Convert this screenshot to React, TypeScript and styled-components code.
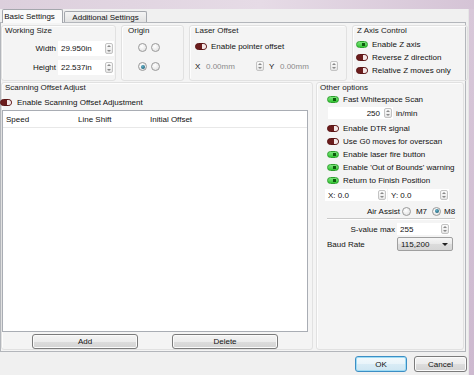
import React from 'react';
import styled, { createGlobalStyle, css } from 'styled-components';

const GlobalStyle = createGlobalStyle`
  html, body { margin: 0; padding: 0; background: #f0f0f0; }
  body {
    font-family: 'Liberation Sans', Arial, sans-serif;
    font-size: 8px;
    color: #111;
  }
  * { box-sizing: border-box; }
`;

const Window = styled.div`
  width: 474px;
  height: 375px;
  overflow: hidden;
  display: flex;
  flex-direction: column;
  background: #f0f0f0;
`;

const TitleStrip = styled.div`
  height: 9px;
  flex: none;
  background: linear-gradient(to right, #dccfdc, #e6dbe6 55%, #d5c4d6);
`;

const Body = styled.div`
  flex: 1;
  display: flex;
`;

const Main = styled.div`
  width: 468px;
  display: flex;
  flex-direction: column;
`;

const Frame = styled.div`
  flex: 1;
  border-left: 1px solid #e6e6e6;
  background: linear-gradient(to bottom, #d8c8d9, #cdb9cf);
`;

const TabBar = styled.div`
  height: 13px;
  display: flex;
  align-items: flex-end;
  gap: 1px;
  padding-left: 2px;
  position: relative;
  z-index: 1;
`;

const Tab = styled.div<{ $active?: boolean; $w: number }>`
  width: ${(p) => p.$w}px;
  display: flex;
  align-items: center;
  justify-content: center;
  border: 1px solid #a4a7ad;
  border-bottom: none;
  border-radius: 2px 2px 0 0;
  ${(p) =>
    p.$active
      ? css`
          height: 14px;
          margin-bottom: -1px;
          background: #fafafa;
          padding-right: 6px;
        `
      : css`
          height: 11px;
          background: linear-gradient(#f4f4f4, #e2e2e2);
        `}
`;

const Pane = styled.div`
  width: 466px;
  height: 330px;
  border: 1px solid #b3b6bb;
  background: #f4f4f4;
  padding: 1px 0 1px 0;
  display: flex;
  flex-direction: column;
  gap: 1px;
`;

const TopRow = styled.div`
  height: 58px;
  display: grid;
  grid-template-columns: 115px 63px 158px 116px;
  column-gap: 5px;
  padding-top: 1px;
`;

const BottomRow = styled.div`
  flex: 1;
  display: grid;
  grid-template-columns: 312px 148px;
  column-gap: 3px;
`;

const Group = styled.div<{ $pad?: number }>`
  border: 1px solid #e1e1e1;
  border-radius: 3px;
  box-shadow: inset 1px 1px 0 #fdfdfd;
  display: flex;
  flex-direction: column;
  padding-left: ${(p) => p.$pad ?? 0}px;
  min-width: 0;
`;

const GroupTitle = styled.div<{ $indent?: number }>`
  height: 10px;
  line-height: 9px;
  padding-left: ${(p) => p.$indent ?? 3}px;
  color: #222;
  white-space: nowrap;
`;

const Row = styled.div<{ $h?: number; $mt?: number; $pl?: number; $gap?: number }>`
  display: flex;
  align-items: center;
  height: ${(p) => p.$h ?? 13}px;
  margin-top: ${(p) => p.$mt ?? 0}px;
  padding-left: ${(p) => p.$pl ?? 0}px;
  gap: ${(p) => p.$gap ?? 0}px;
  white-space: nowrap;
`;

const Label = styled.span<{ $w?: number; $right?: boolean; $muted?: boolean }>`
  ${(p) => p.$w && `width: ${p.$w}px; flex: none;`}
  text-align: ${(p) => (p.$right ? 'right' : 'left')};
  color: ${(p) => (p.$muted ? '#7d7d7d' : '#111')};
`;

/* toggle switch that stands in for a check box */
const Toggle = styled.span<{ $on?: boolean }>`
  width: 12px;
  height: 7px;
  flex: none;
  border-radius: 4px;
  position: relative;
  ${(p) =>
    p.$on
      ? css`
          background: linear-gradient(#7ce57c, #34c634);
          border: 1px solid #2ea02e;
          &::after {
            content: '';
            position: absolute;
            right: 2px;
            top: 1px;
            width: 3px;
            height: 3px;
            background: #0d5a0d;
          }
        `
      : css`
          background: #6c1d1d;
          border: 1px solid #5a1515;
          &::after {
            content: '';
            position: absolute;
            right: 0;
            top: 0;
            width: 4px;
            height: 5px;
            border-radius: 0 3px 3px 0;
            background: #f4e8e8;
          }
        `}
`;

const Check = ({ on, label, gap = 4 }: { on?: boolean; label: string; gap?: number }) => (
  <>
    <Toggle $on={on} />
    <span style={{ marginLeft: gap }}>{label}</span>
  </>
);

const Field = styled.div<{ $w: number; $h?: number; $white?: boolean; $end?: boolean }>`
  width: ${(p) => p.$w}px;
  height: ${(p) => p.$h ?? 12}px;
  flex: none;
  display: flex;
  align-items: center;
  justify-content: ${(p) => (p.$end ? 'flex-end' : 'space-between')};
  gap: 4px;
  padding: 0 1px 0 3px;
  background: ${(p) => (p.$white ? '#ffffff' : 'transparent')};
  color: ${(p) => (p.$white ? '#111' : '#8a8a8a')};
`;

const SpinButton = styled.span<{ $h?: number }>`
  width: 8px;
  height: ${(p) => p.$h ?? 11}px;
  flex: none;
  border: 1px solid #c3c3c3;
  border-radius: 2px;
  background: linear-gradient(#fbfbfb, #e6e6e6);
  display: flex;
  flex-direction: column;
  align-items: center;
  justify-content: space-around;
`;

const Arrow = styled.span<{ $down?: boolean }>`
  width: 0;
  height: 0;
  border-left: 2px solid transparent;
  border-right: 2px solid transparent;
  ${(p) => (p.$down ? 'border-top: 2px solid #8a8a8a;' : 'border-bottom: 2px solid #8a8a8a;')}
`;

const Spin = ({ h }: { h?: number }) => (
  <SpinButton $h={h}>
    <Arrow />
    <Arrow $down />
  </SpinButton>
);

const Radio = styled.span<{ $checked?: boolean }>`
  width: 9px;
  height: 9px;
  flex: none;
  border-radius: 50%;
  border: 1px solid #9a9a9a;
  background: radial-gradient(circle at 40% 35%, #ffffff, #dcdcdc);
  position: relative;
  ${(p) =>
    p.$checked &&
    css`
      &::after {
        content: '';
        position: absolute;
        left: 1.5px;
        top: 1.5px;
        width: 4px;
        height: 4px;
        border-radius: 50%;
        background: radial-gradient(circle at 40% 35%, #5fb0c8, #124d63);
      }
    `}
`;

const RadioGrid = styled.div`
  display: grid;
  grid-template-columns: 9px 9px;
  column-gap: 4px;
  row-gap: 10px;
  margin: 7px 0 0 16px;
`;

const Table = styled.div`
  width: 306px;
  height: 222px;
  margin-top: 2px;
  background: #fff;
  border: 1px solid #a9adb4;
`;

const TableHead = styled.div`
  height: 17px;
  display: grid;
  grid-template-columns: 72px 72px 1fr;
  align-items: center;
  padding-left: 3px;
  border-bottom: 1px solid #e8e8e8;
`;

const ButtonRow = styled.div`
  display: flex;
  gap: 34px;
  padding-left: 30px;
  margin-top: 2px;
`;

const Button = styled.button<{ $w: number; $h?: number; $default?: boolean }>`
  width: ${(p) => p.$w}px;
  height: ${(p) => p.$h ?? 15}px;
  padding: 0;
  font: inherit;
  color: #111;
  border-radius: 3px;
  border: 1px solid #7b7b7b;
  background: linear-gradient(#f4f4f4, #ececec 50%, #dddddd 50%, #d3d3d3);
  box-shadow: inset 0 0 0 1px #fbfbfb;
  ${(p) =>
    p.$default &&
    css`
      border-color: #3c8ec4;
      box-shadow: inset 0 0 0 1px #9fdcf5;
      background: linear-gradient(#f3f9fc, #e8f4fa 50%, #d9ecf6 50%, #cfe6f2);
    `}
`;

const Separator = styled.div`
  height: 2px;
  margin: 1px 8px 0 10px;
  border-top: 1px solid #c9c9c9;
  border-bottom: 1px solid #ffffff;
`;

const Combo = styled.div`
  width: 56px;
  height: 14px;
  display: flex;
  align-items: center;
  justify-content: space-between;
  padding: 0 4px 0 3px;
  border: 1px solid #9f9f9f;
  border-radius: 2px;
  background: linear-gradient(#f6f6f6, #e9e9e9 50%, #dcdcdc 50%, #d6d6d6);
`;

const ComboArrow = styled.span`
  width: 0;
  height: 0;
  border-left: 3px solid transparent;
  border-right: 3px solid transparent;
  border-top: 3px solid #222;
`;

const Footer = styled.div`
  flex: 1;
  display: flex;
  justify-content: flex-end;
  align-items: flex-start;
  gap: 7px;
  padding: 4px 1px 0 0;
`;

export default function App() {
  return (
    <Window>
      <GlobalStyle />
      <TitleStrip />
      <Body>
        <Main>
          <TabBar>
            <Tab $active $w={61}>Basic Settings</Tab>
            <Tab $w={83}>Additional Settings</Tab>
          </TabBar>
          <Pane>
            <TopRow>
              <Group>
                <GroupTitle>Working Size</GroupTitle>
                <Row $h={15} $mt={5} $gap={2}>
                  <Label $w={54} $right>Width</Label>
                  <Field $w={56} $h={15} $white>
                    29.950in
                    <Spin />
                  </Field>
                </Row>
                <Row $h={15} $mt={4} $gap={2}>
                  <Label $w={54} $right>Height</Label>
                  <Field $w={56} $h={15} $white>
                    22.537in
                    <Spin />
                  </Field>
                </Row>
              </Group>
              <Group>
                <GroupTitle $indent={6}>Origin</GroupTitle>
                <RadioGrid>
                  <Radio />
                  <Radio />
                  <Radio $checked />
                  <Radio />
                </RadioGrid>
              </Group>
              <Group $pad={5}>
                <GroupTitle $indent={0}>Laser Offset</GroupTitle>
                <Row $mt={4}>
                  <Check label="Enable pointer offset" />
                </Row>
                <Row $h={14} $mt={6}>
                  <Label $w={8}>X</Label>
                  <Field $w={62} $h={14}>
                    0.00mm
                    <Spin h={10} />
                  </Field>
                  <Label $w={8} style={{ marginLeft: 4 }}>Y</Label>
                  <Field $w={62} $h={14}>
                    0.00mm
                    <Spin h={10} />
                  </Field>
                </Row>
              </Group>
              <Group $pad={3}>
                <GroupTitle $indent={1}>Z Axis Control</GroupTitle>
                <Row $mt={2}>
                  <Check on label="Enable Z axis" />
                </Row>
                <Row>
                  <Check label="Reverse Z direction" />
                </Row>
                <Row>
                  <Check label="Relative Z moves only" />
                </Row>
              </Group>
            </TopRow>
            <BottomRow>
              <Group>
                <GroupTitle>Scanning Offset Adjust</GroupTitle>
                <Row $h={12} $mt={3} style={{ marginLeft: -2 }}>
                  <Check label="Enable Scanning Offset Adjustment" gap={5} />
                </Row>
                <Table>
                  <TableHead>
                    <span>Speed</span>
                    <span>Line Shift</span>
                    <span>Initial Offset</span>
                  </TableHead>
                </Table>
                <ButtonRow>
                  <Button $w={106}>Add</Button>
                  <Button $w={106}>Delete</Button>
                </ButtonRow>
              </Group>
              <Group>
                <GroupTitle>Other options</GroupTitle>
                <Row $pl={10}>
                  <Check on label="Fast Whitespace Scan" />
                </Row>
                <Row $h={12} $mt={1} $pl={11} $gap={3}>
                  <Field $w={65} $white $end>
                    250
                    <Spin h={10} />
                  </Field>
                  <span>in/min</span>
                </Row>
                <Row $mt={3} $pl={10}>
                  <Check label="Enable DTR signal" />
                </Row>
                <Row $pl={10}>
                  <Check label="Use G0 moves for overscan" />
                </Row>
                <Row $pl={10}>
                  <Check on label="Enable laser fire button" />
                </Row>
                <Row $pl={10}>
                  <Check on label="Enable 'Out of Bounds' warning" />
                </Row>
                <Row $pl={10}>
                  <Check on label="Return to Finish Position" />
                </Row>
                <Row $h={12} $mt={2} $pl={8} $gap={1}>
                  <Field $w={62} $white>
                    X: 0.0
                    <Spin h={10} />
                  </Field>
                  <Field $w={61} $white>
                    Y: 0.0
                    <Spin h={10} />
                  </Field>
                </Row>
                <Row $h={12} $mt={4} $pl={50}>
                  <span>Air Assist</span>
                  <Radio style={{ marginLeft: 2 }} />
                  <span style={{ marginLeft: 5 }}>M7</span>
                  <Radio $checked style={{ marginLeft: 5 }} />
                  <span style={{ marginLeft: 3 }}>M8</span>
                </Row>
                <Separator />
                <Row $h={12} $mt={3} $gap={2}>
                  <Label $w={78} $right>S-value max</Label>
                  <Field $w={53} $white>
                    255
                    <Spin h={10} />
                  </Field>
                </Row>
                <Row $h={14} $mt={2} $pl={10}>
                  <Label $w={70}>Baud Rate</Label>
                  <Combo>
                    115,200
                    <ComboArrow />
                  </Combo>
                </Row>
              </Group>
            </BottomRow>
          </Pane>
          <Footer>
            <Button $w={52} $h={16} $default>OK</Button>
            <Button $w={53} $h={16}>Cancel</Button>
          </Footer>
        </Main>
        <Frame />
      </Body>
    </Window>
  );
}
